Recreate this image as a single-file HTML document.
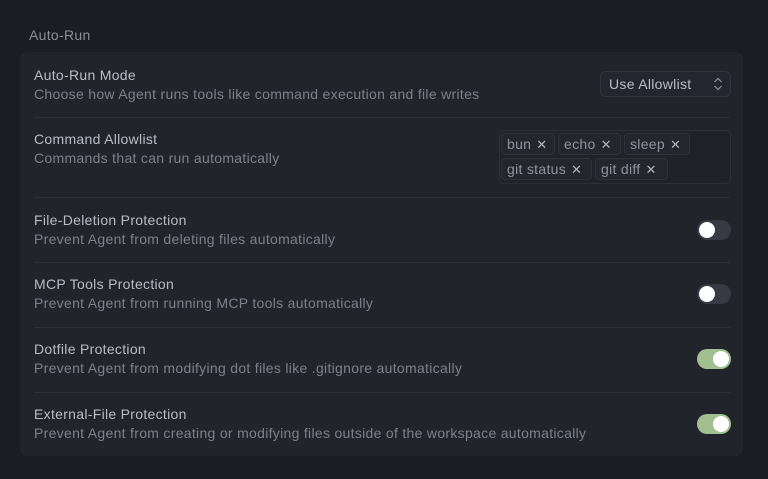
<!DOCTYPE html>
<html><head><meta charset="utf-8"><style>
*{box-sizing:border-box;margin:0;padding:0}
body{width:768px;height:479px;background:#1b1d22;font-family:"Liberation Sans",sans-serif;overflow:hidden;position:relative;letter-spacing:.3px}
.h{position:absolute;left:29px;top:27px;font-size:14px;color:#8a8f99}
.card{position:absolute;left:20px;top:52px;width:723px;height:404px;background:#21242b;border-radius:7px}
.t{position:absolute;left:0;font-size:14px;color:#b9bdc6}
.d{position:absolute;left:0;font-size:14px;color:#7c818c}
.tg{position:absolute;right:0;width:34px;height:20px;border-radius:10px;background:#373a45}
.tg::after{content:"";position:absolute;top:2px;left:2px;width:16px;height:16px;border-radius:50%;background:#fff}
.tg.on{background:#a3bf91}
.tg.on::after{left:16px}
.sel{position:absolute;left:600px;top:71px;width:131px;height:26px;border:1px solid #30333c;border-radius:6px;background:#23262e;color:#b9bdc6;font-size:14px;padding:4px 0 0 8px}
.tags{position:absolute;left:499px;top:130px;width:232px;height:54px;border:1px solid #2c2f37;border-radius:5px;background:#1f2228}
.tag{position:absolute;height:22px;border:1px solid #2e313a;border-radius:4px;background:#23262d;color:#8f94a0;font-size:14px;padding:2px 0 0 5px;white-space:nowrap}
.tag span{color:#b0b5be;margin-left:5px;font-size:13px}
</style></head><body>
<div class="h">Auto-Run</div>
<div class="card"></div>
<div class="t" style="position:absolute;left:34px;top:67px">Auto-Run Mode</div>
<div class="d" style="position:absolute;left:34px;top:86px">Choose how Agent runs tools like command execution and file writes</div>
<div style="position:absolute;left:34px;right:38px;top:117px;border-top:1px solid #2c2f37"></div>
<div class="sel">Use Allowlist<svg style="position:absolute;right:7px;top:5px" width="10" height="14" viewBox="0 0 10 14"><path d="M1.5 5 5 1.5 8.5 5M1.5 9 5 12.5 8.5 9" fill="none" stroke="#8f94a0" stroke-width="1.2"/></svg></div>
<div class="t" style="position:absolute;left:34px;top:131px">Command Allowlist</div>
<div class="d" style="position:absolute;left:34px;top:150px">Commands that can run automatically</div>
<div class="tags"></div>
<div class="tag" style="left:501px;top:133px;width:54px">bun<span>✕</span></div>
<div class="tag" style="left:558px;top:133px;width:63px">echo<span>✕</span></div>
<div class="tag" style="left:624px;top:133px;width:66px">sleep<span>✕</span></div>
<div class="tag" style="left:501px;top:158px;width:91px">git status<span>✕</span></div>
<div class="tag" style="left:595px;top:158px;width:73px">git diff<span>✕</span></div>
<div style="position:absolute;left:34px;right:38px;top:197px;border-top:1px solid #2c2f37"></div>

<div class="t" style="position:absolute;left:34px;top:212px">File-Deletion Protection</div>
<div class="d" style="position:absolute;left:34px;top:231px">Prevent Agent from deleting files automatically</div>
<div class="tg" style="right:37px;top:220px"></div>
<div style="position:absolute;left:34px;right:38px;top:262px;border-top:1px solid #2c2f37"></div>

<div class="t" style="position:absolute;left:34px;top:276px">MCP Tools Protection</div>
<div class="d" style="position:absolute;left:34px;top:295px">Prevent Agent from running MCP tools automatically</div>
<div class="tg" style="right:37px;top:284px"></div>
<div style="position:absolute;left:34px;right:38px;top:327px;border-top:1px solid #2c2f37"></div>

<div class="t" style="position:absolute;left:34px;top:341px">Dotfile Protection</div>
<div class="d" style="position:absolute;left:34px;top:360px">Prevent Agent from modifying dot files like .gitignore automatically</div>
<div class="tg on" style="right:37px;top:349px"></div>
<div style="position:absolute;left:34px;right:38px;top:392px;border-top:1px solid #2c2f37"></div>

<div class="t" style="position:absolute;left:34px;top:406px">External-File Protection</div>
<div class="d" style="position:absolute;left:34px;top:425px">Prevent Agent from creating or modifying files outside of the workspace automatically</div>
<div class="tg on" style="right:37px;top:414px"></div>
</body></html>
